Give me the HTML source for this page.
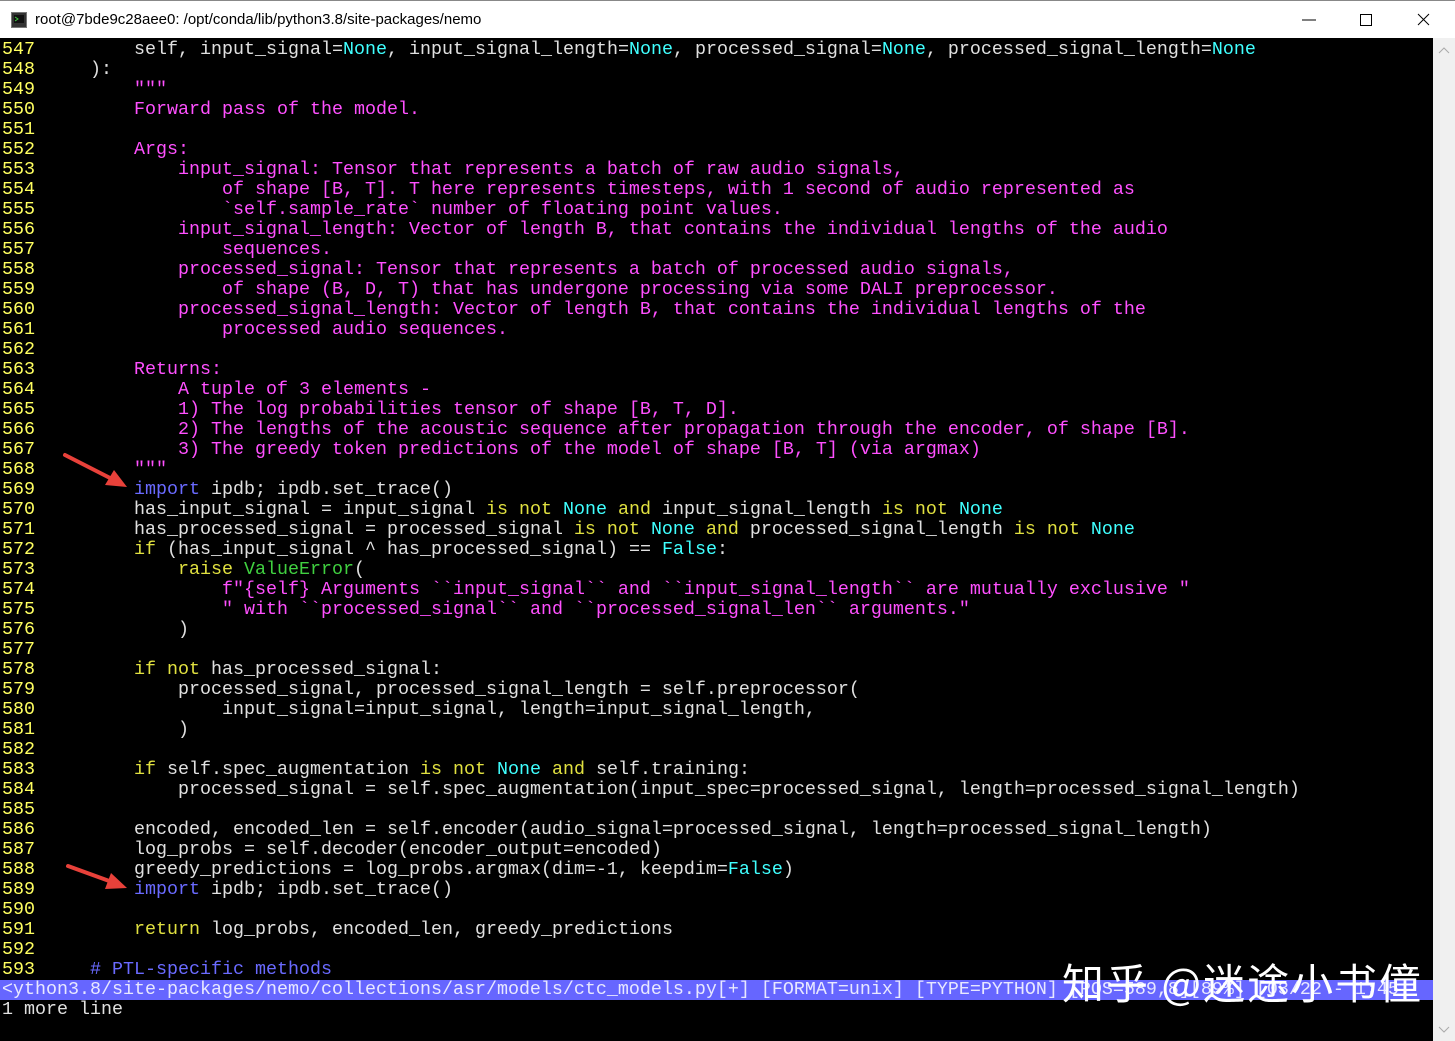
<!DOCTYPE html>
<html><head><meta charset="utf-8"><style>
body{margin:0;width:1455px;height:1041px;background:#fff;overflow:hidden;position:relative;font-family:"Liberation Sans",sans-serif}
#title{position:absolute;left:0;top:0;width:1455px;height:38px;background:#fff;border-top:1px solid #888;box-sizing:border-box}
#title .t{position:absolute;left:35px;top:10px;font-size:15px;color:#000}
#term{position:absolute;left:0;top:38px;width:1433px;height:1003px;background:#000}
#sb{position:absolute;left:1433px;top:38px;width:22px;height:1003px;background:#f0f0f0}
pre{margin:0;position:absolute;left:2px;top:40px;font-family:"Liberation Mono",monospace;font-size:18.33px;line-height:20px;color:#e0e0e0;white-space:pre}
.n{color:#ffff60}.m{color:#ff50ff}.c{color:#40ffff}.k{color:#e0e040}.g{color:#40d040}.b{color:#6a6aff}
.st{background:#6666ff;color:#e8e8ff;display:inline-block;width:1431px}
#wm{position:absolute;left:1062px;top:951px;font-family:"Noto Sans CJK SC",sans-serif;font-size:42px;color:#fff;letter-spacing:2px}
</style></head><body>
<div id="title">
<svg style="position:absolute;left:11px;top:11px" width="16" height="16"><rect x="0.5" y="0.5" width="15" height="15" fill="#333" stroke="#777"/><rect x="3" y="3" width="10" height="8" fill="#111"/><path d="M4 5l3 2-3 2" stroke="#4c4" fill="none"/></svg>
<span class="t">root@7bde9c28aee0: /opt/conda/lib/python3.8/site-packages/nemo</span>
<svg style="position:absolute;left:1296px;top:10px" width="140" height="20"><line x1="6" y1="9" x2="20" y2="9" stroke="#000"/><rect x="64.5" y="3.5" width="11" height="11" fill="none" stroke="#000"/><path d="M122 3l11 11M133 3l-11 11" stroke="#000"/></svg>
</div>
<div id="term"></div>
<div id="sb"><svg style="position:absolute;left:5px;top:8px" width="12" height="8"><path d="M1 7l5-5 5 5" stroke="#aaa" fill="none"/></svg><svg style="position:absolute;left:5px;top:988px" width="12" height="8"><path d="M1 1l5 5 5-5" stroke="#aaa" fill="none"/></svg></div>
<pre><span class="n">547 </span>        self, input_signal=<span class="c">None</span>, input_signal_length=<span class="c">None</span>, processed_signal=<span class="c">None</span>, processed_signal_length=<span class="c">None</span>
<span class="n">548 </span>    ):
<span class="n">549 </span>        <span class="m">"""</span>
<span class="n">550 </span>        <span class="m">Forward pass of the model.</span>
<span class="n">551 </span>
<span class="n">552 </span>        <span class="m">Args:</span>
<span class="n">553 </span><span class="m">            input_signal: Tensor that represents a batch of raw audio signals,</span>
<span class="n">554 </span><span class="m">                of shape [B, T]. T here represents timesteps, with 1 second of audio represented as</span>
<span class="n">555 </span><span class="m">                `self.sample_rate` number of floating point values.</span>
<span class="n">556 </span><span class="m">            input_signal_length: Vector of length B, that contains the individual lengths of the audio</span>
<span class="n">557 </span><span class="m">                sequences.</span>
<span class="n">558 </span><span class="m">            processed_signal: Tensor that represents a batch of processed audio signals,</span>
<span class="n">559 </span><span class="m">                of shape (B, D, T) that has undergone processing via some DALI preprocessor.</span>
<span class="n">560 </span><span class="m">            processed_signal_length: Vector of length B, that contains the individual lengths of the</span>
<span class="n">561 </span><span class="m">                processed audio sequences.</span>
<span class="n">562 </span>
<span class="n">563 </span><span class="m">        Returns:</span>
<span class="n">564 </span><span class="m">            A tuple of 3 elements -</span>
<span class="n">565 </span><span class="m">            1) The log probabilities tensor of shape [B, T, D].</span>
<span class="n">566 </span><span class="m">            2) The lengths of the acoustic sequence after propagation through the encoder, of shape [B].</span>
<span class="n">567 </span><span class="m">            3) The greedy token predictions of the model of shape [B, T] (via argmax)</span>
<span class="n">568 </span><span class="m">        """</span>
<span class="n">569 </span>        <span class="b">import</span> ipdb; ipdb.set_trace()
<span class="n">570 </span>        has_input_signal = input_signal <span class="k">is not</span> <span class="c">None</span> <span class="k">and</span> input_signal_length <span class="k">is not</span> <span class="c">None</span>
<span class="n">571 </span>        has_processed_signal = processed_signal <span class="k">is not</span> <span class="c">None</span> <span class="k">and</span> processed_signal_length <span class="k">is not</span> <span class="c">None</span>
<span class="n">572 </span>        <span class="k">if</span> (has_input_signal ^ has_processed_signal) == <span class="c">False</span>:
<span class="n">573 </span>            <span class="k">raise</span> <span class="g">ValueError</span>(
<span class="n">574 </span>                <span class="m">f"{self} Arguments ``input_signal`` and ``input_signal_length`` are mutually exclusive "</span>
<span class="n">575 </span>                <span class="m">" with ``processed_signal`` and ``processed_signal_len`` arguments."</span>
<span class="n">576 </span>            )
<span class="n">577 </span>
<span class="n">578 </span>        <span class="k">if not</span> has_processed_signal:
<span class="n">579 </span>            processed_signal, processed_signal_length = self.preprocessor(
<span class="n">580 </span>                input_signal=input_signal, length=input_signal_length,
<span class="n">581 </span>            )
<span class="n">582 </span>
<span class="n">583 </span>        <span class="k">if</span> self.spec_augmentation <span class="k">is not</span> <span class="c">None</span> <span class="k">and</span> self.training:
<span class="n">584 </span>            processed_signal = self.spec_augmentation(input_spec=processed_signal, length=processed_signal_length)
<span class="n">585 </span>
<span class="n">586 </span>        encoded, encoded_len = self.encoder(audio_signal=processed_signal, length=processed_signal_length)
<span class="n">587 </span>        log_probs = self.decoder(encoder_output=encoded)
<span class="n">588 </span>        greedy_predictions = log_probs.argmax(dim=-1, keepdim=<span class="c">False</span>)
<span class="n">589 </span>        <span class="b">import</span> ipdb; ipdb.set_trace()
<span class="n">590 </span>
<span class="n">591 </span>        <span class="k">return</span> log_probs, encoded_len, greedy_predictions
<span class="n">592 </span>
<span class="n">593 </span>    <span class="b"># PTL-specific methods</span>
<span class="st" style="margin-left:-2px;padding-left:2px">&lt;ython3.8/site-packages/nemo/collections/asr/models/ctc_models.py[+] [FORMAT=unix] [TYPE=PYTHON] [POS=589,8][89%] [03/22 - 1:45</span>
1 more line</pre>
<div id="wm">知乎 @迷途小书僮</div>
<svg style="position:absolute;left:0;top:0" width="200" height="1041">
<line x1="65" y1="455" x2="112" y2="479" stroke="#e8413a" stroke-width="4" stroke-linecap="round"/><path d="M127 487l-22-2 9-15z" fill="#e8413a"/>
<line x1="68" y1="866" x2="112" y2="882" stroke="#e8413a" stroke-width="4" stroke-linecap="round"/><path d="M127 888l-22 1 6-16z" fill="#e8413a"/>
</svg>
</body></html>
